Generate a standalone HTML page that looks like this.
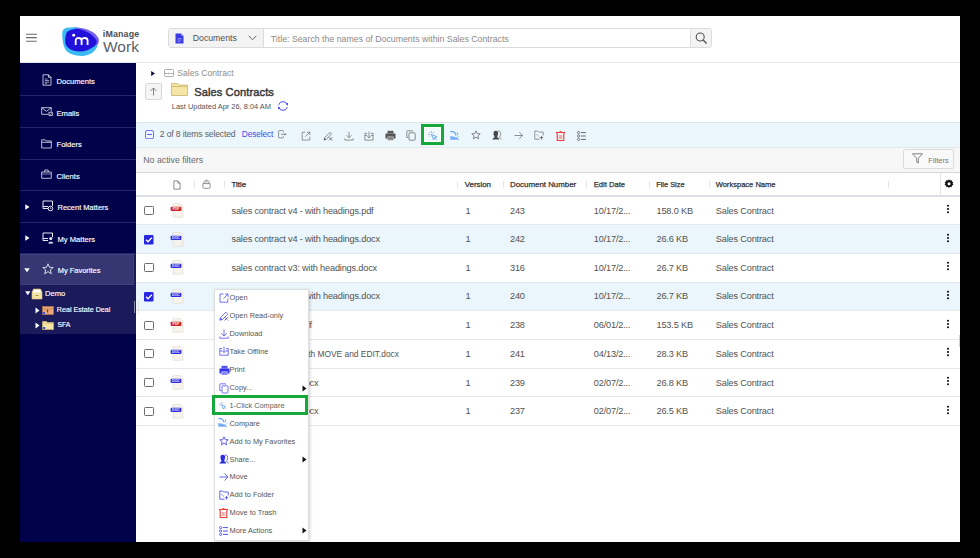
<!DOCTYPE html>
<html><head><meta charset="utf-8">
<style>
*{box-sizing:border-box;margin:0;padding:0}
html,body{width:980px;height:558px;background:#000;overflow:hidden}
body{position:relative;font-family:"Liberation Sans",sans-serif;color:#444}
.a{position:absolute}
.t{position:absolute;white-space:nowrap;line-height:1}
#app{position:absolute;left:20px;top:16px;width:940px;height:526px;background:#fff;overflow:hidden}
</style></head><body>
<div id="app"></div>

<!-- HEADER -->
<div class="a" style="left:20px;top:62px;width:940px;height:1px;background:#e6e6e6"></div>
<svg class="a" style="left:26px;top:32px" width="11" height="11" viewBox="0 0 11 11" stroke="#6a6a6a" stroke-width="1.1"><path d="M0 2.3 H10.8 M0 5.6 H10.8 M0 9.3 H10.8"/></svg>

<!-- logo -->
<svg class="a" style="left:58px;top:24px" width="44" height="34" viewBox="0 0 44 34">
  <path d="M4.3 12 C4 7 5 4.5 9 3.8 C13 3.2 17 3 20 3.6 C30 6 40 13 39.6 20 C39.5 27 31 32 24 32 C16 32 9 29 7 25 C5 21 4.5 16 4.3 12Z" fill="#3cbaf3"/>
  <path d="M16 3.8 C27 2.8 38 8 40.6 14.5 C41.3 17 40.8 19.5 38.8 21.5 L30 12Z" fill="#7362ee"/>
  <path d="M9 8 C12 5.2 16 4.6 20 5 C28 6 35.5 11 38.5 16.5 C39.2 19 38 21 36 22.5 C32 25.5 27 27.5 22 27.5 C15 27.5 8 24 7.3 19 C7 15 7.5 10.5 9 8Z" fill="#2211da"/>
  <circle cx="15.7" cy="11.3" r="1.45" fill="#fff"/>
  <path d="M17.7 21 V16.5 C17.7 14.8 19 14 20.6 14 C22.2 14 23.6 14.8 23.6 16.5 V21 M23.6 16.5 C23.6 14.8 25 14 26.6 14 C28.2 14 29.6 14.8 29.6 16.5 V21" fill="none" stroke="#fff" stroke-width="1.8"/>
</svg>
<div class="t" style="left:102.8px;top:29.8px;font-size:8.9px;font-weight:700;color:#4a4f56;letter-spacing:0.15px">iManage</div>
<div class="t" style="left:103px;top:39.3px;font-size:15.5px;color:#5a626b">Work</div>

<!-- search -->
<div class="a" style="left:168px;top:28px;width:544px;height:20px;border:1px solid #dcdcdc;border-radius:3px;background:#fff"></div>
<div class="a" style="left:169px;top:29px;width:95px;height:18px;background:#f3f3f3;border-right:1px solid #dcdcdc;border-radius:2px 0 0 2px"></div>
<div class="a" style="left:690px;top:29px;width:21px;height:18px;background:#f3f3f3;border-left:1px solid #dcdcdc;border-radius:0 2px 2px 0"></div>


<!-- SIDEBAR -->
<div class="a" style="left:20px;top:63px;width:116px;height:479px;background:#00024a"></div>
<div class="a" style="left:20px;top:95px;width:116px;height:1px;background:#24266a"></div>
<div class="a" style="left:20px;top:127px;width:116px;height:1px;background:#24266a"></div>
<div class="a" style="left:20px;top:159px;width:116px;height:1px;background:#24266a"></div>
<div class="a" style="left:20px;top:190px;width:116px;height:1px;background:#24266a"></div>
<div class="a" style="left:20px;top:222px;width:116px;height:1px;background:#24266a"></div>
<div class="a" style="left:20px;top:253px;width:116px;height:1px;background:#24266a"></div>
<div class="a" style="left:20px;top:254px;width:116px;height:31px;background:#1b1b5c"></div>
<div class="a" style="left:20px;top:254px;width:114.3px;height:30.5px;background:#363672;border:1px solid #40407c;border-left:none"></div>
<div class="a" style="left:20px;top:285px;width:116px;height:49px;background:#1b1b5c"></div>
<div class="a" style="left:134px;top:300.6px;width:1px;height:12.4px;background:#8a8aa8"></div>

<svg class="a" style="left:41.5px;top:73.5px" width="10" height="12" viewBox="0 0 10 12" fill="none" stroke="#dcdcea" stroke-width="0.85">
 <path d="M1 0.8 H6.5 L9 3.3 V11.2 H1Z M6.5 0.8 V3.3 H9"/><path d="M2.8 5 H5.5 M2.8 6.6 H7.2 M2.8 8.2 H7.2 M2.8 9.7 H5" stroke-width="0.7"/></svg>
<div class="t" style="left:56.5px;top:77.5px;font-size:7.6px;color:#fff;-webkit-text-stroke:0.15px #fff">Documents</div>

<svg class="a" style="left:41px;top:107.2px" width="12" height="9" viewBox="0 0 12 9" fill="none" stroke="#dcdcea" stroke-width="0.85">
 <path d="M7.5 7.3 H0.7 V0.7 H10.3 V4.5"/><path d="M0.7 0.7 L5.5 4.3 L10.3 0.7"/><rect x="8" y="5.2" width="3.3" height="3.3" fill="#00024a" stroke-width="0.8"/><path d="M8.8 7 L9.6 7.7 L10.7 6" stroke-width="0.6"/></svg>
<div class="t" style="left:56.5px;top:109.5px;font-size:7.6px;color:#fff;-webkit-text-stroke:0.15px #fff">Emails</div>

<svg class="a" style="left:41px;top:139px" width="11" height="10" viewBox="0 0 11 10" fill="none" stroke="#dcdcea" stroke-width="0.85">
 <path d="M0.7 0.8 H4.3 L5.2 2 H10.3 V9 H0.7Z M0.7 3.3 H10.3"/></svg>
<div class="t" style="left:56.5px;top:141px;font-size:7.6px;color:#fff;-webkit-text-stroke:0.15px #fff">Folders</div>

<svg class="a" style="left:41px;top:169.2px" width="11" height="10" viewBox="0 0 11 10" fill="none" stroke="#dcdcea" stroke-width="0.85">
 <path d="M0.7 3 H10.3 V9.3 H0.7Z M3.8 3 V1 H7.2 V3"/><path d="M0.7 5 H10.3" stroke-width="0.6"/></svg>
<div class="t" style="left:56.5px;top:172.6px;font-size:7.6px;color:#fff;-webkit-text-stroke:0.15px #fff">Clients</div>

<svg class="a" style="left:25px;top:203.5px" width="5" height="6" viewBox="0 0 5 6"><path d="M0.3 0.2 L4.5 3 L0.3 5.8Z" fill="#fff"/></svg>
<svg class="a" style="left:42px;top:200px" width="12" height="12" viewBox="0 0 12 12" fill="none" stroke="#e8e8f0" stroke-width="1">
 <path d="M10.5 6 V1 H1 V8.5 H6 M1 6.5 H6"/><circle cx="8.5" cy="8.5" r="2.3"/><path d="M8.5 7.3 V8.6 H9.6" stroke-width="0.7"/></svg>
<div class="t" style="left:57.5px;top:203.6px;font-size:7.5px;color:#fff;-webkit-text-stroke:0.15px #fff">Recent Matters</div>

<svg class="a" style="left:25px;top:235.3px" width="5" height="6" viewBox="0 0 5 6"><path d="M0.3 0.2 L4.5 3 L0.3 5.8Z" fill="#fff"/></svg>
<svg class="a" style="left:42px;top:232px" width="12" height="12" viewBox="0 0 12 12" fill="none" stroke="#e8e8f0" stroke-width="1">
 <path d="M10.5 5 V1 H1 V8.5 H6 M1 6.5 H6"/><circle cx="8.8" cy="6.5" r="1.6" fill="#e8e8f0" stroke="none"/><path d="M6.3 11.5 C6.3 9 11.3 9 11.3 11.5Z" fill="#e8e8f0" stroke="none"/></svg>
<div class="t" style="left:57.5px;top:235.5px;font-size:7.6px;color:#fff;-webkit-text-stroke:0.15px #fff">My Matters</div>

<svg class="a" style="left:24.3px;top:267.5px" width="6" height="5" viewBox="0 0 6 5"><path d="M0.2 0.3 H5.8 L3 4.3Z" fill="#fff"/></svg>
<svg class="a" style="left:41.5px;top:263px" width="12" height="12" viewBox="0 0 12 12" fill="none" stroke="#e8e8f0" stroke-width="0.9">
 <path d="M6 0.8 L7.5 4.3 L11.2 4.5 L8.3 6.9 L9.3 10.8 L6 8.6 L2.7 10.8 L3.7 6.9 L0.8 4.5 L4.5 4.3 Z"/></svg>
<div class="t" style="left:57.8px;top:267px;font-size:7.45px;color:#fff;-webkit-text-stroke:0.15px #fff">My Favorites</div>

<svg class="a" style="left:24.5px;top:291px" width="6" height="5" viewBox="0 0 6 5"><path d="M0.2 0.3 H5.4 L2.8 4.2Z" fill="#fff"/></svg>
<svg class="a" style="left:31px;top:288px" width="12" height="12" viewBox="0 0 12 12">
 <path d="M1 4 L2.5 1 H9.5 L11 4 V11 H1 Z" fill="#f3e3a5" stroke="#d8c27a" stroke-width="0.6"/><path d="M2 4.5 L3 2 H9 L10 4.5Z" fill="#fff"/><rect x="4.5" y="7" width="3" height="1" fill="#b09a50"/></svg>
<div class="t" style="left:45px;top:289.5px;font-size:7.6px;color:#fff;-webkit-text-stroke:0.15px #fff">Demo</div>

<svg class="a" style="left:35px;top:307px" width="5" height="7" viewBox="0 0 5 7"><path d="M0.5 0.5 L4.5 3.5 L0.5 6.5Z" fill="#fff"/></svg>
<svg class="a" style="left:41.5px;top:306px" width="12" height="9" viewBox="0 0 12 9">
 <rect x="0.5" y="0.5" width="11" height="8" fill="#e8a878" stroke="#c07848" stroke-width="0.6"/><path d="M0.5 3 H11.5" stroke="#c07848" stroke-width="0.6"/><rect x="5" y="3.5" width="1.2" height="3" fill="#a02020"/><rect x="0.5" y="6" width="2.5" height="2" fill="#3a5ae0"/></svg>
<div class="t" style="left:56.8px;top:306.5px;font-size:7.15px;color:#fff;-webkit-text-stroke:0.15px #fff">Real Estate Deal</div>

<svg class="a" style="left:35px;top:322px" width="5" height="7" viewBox="0 0 5 7"><path d="M0.5 0.5 L4.5 3.5 L0.5 6.5Z" fill="#fff"/></svg>
<svg class="a" style="left:42px;top:321px" width="12" height="9" viewBox="0 0 12 9">
 <path d="M0.5 0.5 H4.5 L5.5 1.5 H11.5 V8.5 H0.5Z" fill="#f3e5a8" stroke="#d4bc70" stroke-width="0.6"/><path d="M0.5 2.5 H11.5" stroke="#d4bc70" stroke-width="0.6"/><rect x="0.8" y="6" width="2.5" height="2" fill="#3a5ae0"/></svg>
<div class="t" style="left:57.4px;top:321.5px;font-size:6.9px;color:#fff;-webkit-text-stroke:0.15px #fff">SFA</div>


<!-- SEARCH CONTENT -->
<svg class="a" style="left:174.5px;top:33px" width="9" height="11" viewBox="0 0 9 11">
 <path d="M0.5 0.5 H6 L8.5 3 V10.5 H0.5Z" fill="#3a3ae6"/><path d="M6 0.5 V3 H8.5" fill="#8a8af0"/><path d="M2.5 5.5 H6.5 M2.5 7 H6.5 M2.5 8.5 H5" stroke="#b8b8f8" stroke-width="0.6"/></svg>
<div class="t" style="left:192.8px;top:34.4px;font-size:8.7px;color:#505050">Documents</div>
<svg class="a" style="left:247.5px;top:35px" width="9" height="6" viewBox="0 0 9 6"><path d="M0.7 0.8 L4.5 4.8 L8.3 0.8" fill="none" stroke="#666" stroke-width="1"/></svg>
<div class="t" style="left:270.8px;top:34.6px;font-size:8.77px;color:#8a8a8a">Title: Search the names of Documents within Sales Contracts</div>
<svg class="a" style="left:695px;top:31.5px" width="13" height="13" viewBox="0 0 13 13" fill="none" stroke="#555" stroke-width="1.1">
 <circle cx="5.2" cy="5.0" r="4.0"/><path d="M8.1 8 L11.6 11.5" stroke-width="1.3"/></svg>

<!-- BREADCRUMB / TITLE -->
<svg class="a" style="left:151px;top:71.2px" width="5" height="5" viewBox="0 0 5 5"><path d="M0.2 0.1 L4 2.5 L0.2 4.9Z" fill="#0a0a3a"/></svg>
<svg class="a" style="left:164px;top:68.8px" width="10" height="8" viewBox="0 0 10 8" fill="none" stroke="#a0a0a0" stroke-width="0.85">
 <rect x="0.5" y="0.5" width="9" height="7" rx="0.8"/><path d="M1 4.5 H3.8 M6.2 4.5 H9"/><path d="M4.3 3.3 L5.8 4.5 L4.3 5.7Z" fill="#999" stroke="none"/></svg>
<div class="t" style="left:177.3px;top:69px;font-size:8.6px;color:#8e8e8e">Sales Contract</div>

<div class="a" style="left:145px;top:83px;width:17px;height:17px;border:1px solid #d8d8d8;border-radius:2px;background:#f5f5f5"></div>
<svg class="a" style="left:149px;top:87px" width="9" height="10" viewBox="0 0 9 10" fill="none" stroke="#666" stroke-width="0.8"><path d="M4.5 8.5 V1 M1.5 4 L4.5 1 L7.5 4"/></svg>
<svg class="a" style="left:171px;top:83px" width="17" height="13" viewBox="0 0 17 13">
 <path d="M0.5 0.5 H6.5 L7.8 2 H16.5 V12.5 H0.5Z" fill="#f5e6a6" stroke="#c9b26a" stroke-width="0.8"/><path d="M0.5 3.5 H16.5" stroke="#c9b26a" stroke-width="0.8"/></svg>
<div class="t" style="left:194.2px;top:86.6px;font-size:11.1px;color:#3a3a3a;-webkit-text-stroke:0.45px #3a3a3a;letter-spacing:0.1px">Sales Contracts</div>
<div class="t" style="left:171.8px;top:102.8px;font-size:7.45px;color:#555">Last Updated Apr 26, 8:04 AM</div>
<svg class="a" style="left:278.3px;top:100.9px" width="10" height="10" viewBox="0 0 10 10" fill="none" stroke="#3a3ae6" stroke-width="0.9">
 <path d="M0.75 3.86 A4.4 4.4 0 0 1 9.25 3.86"/><path d="M9.25 6.14 A4.4 4.4 0 0 1 0.75 6.14"/><path d="M8.2 2.6 L9.6 4.3 L10 2.3Z M1.8 7.4 L0.4 5.7 L0 7.7Z" fill="#3a3ae6" stroke-width="0.5"/></svg>

<!-- TOOLBAR -->
<div class="a" style="left:136px;top:121.5px;width:824px;height:1px;background:#dde3e8"></div>
<div class="a" style="left:136px;top:122.5px;width:824px;height:24px;background:#ebf7fd"></div>
<div class="a" style="left:136px;top:146.5px;width:824px;height:25.5px;background:#f7f7f7;border-top:1px solid #e4e8ea"></div>
<div class="a" style="left:136px;top:172px;width:824px;height:1px;background:#d6d6d6"></div>

<svg class="a" style="left:145px;top:130px" width="9" height="9" viewBox="0 0 9 9"><rect x="0.5" y="0.5" width="8" height="8.2" rx="1.5" fill="none" stroke="#5a5aec" stroke-width="0.85"/><path d="M2.2 4.5 H6.8" stroke="#4848e0" stroke-width="0.9"/></svg>
<div class="t" style="left:159.8px;top:129.9px;font-size:8.6px;color:#606060;letter-spacing:-0.15px">2 of 8 items selected</div>
<div class="t" style="left:241.8px;top:129.8px;font-size:8.4px;color:#4a4ae8;letter-spacing:-0.15px">Deselect</div>
<svg class="a" style="left:277.5px;top:130px" width="9" height="9" viewBox="0 0 9 9" fill="none" stroke="#808080" stroke-width="0.85"><path d="M5.5 2.2 V1.3 C5.5 0.9 5.2 0.6 4.8 0.6 H1.2 C0.8 0.6 0.6 0.9 0.6 1.3 V7.2 C0.6 7.6 0.8 7.9 1.2 7.9 H4.8 C5.2 7.9 5.5 7.6 5.5 7.2 V6.3 M3 4.25 H7.5"/><path d="M6.6 3 L8.6 4.25 L6.6 5.5Z" fill="#707070" stroke="none"/></svg>


<!-- TOOLBAR ICONS -->
<svg class="a" style="left:301px;top:130.5px" width="10" height="10" viewBox="0 0 10 10" fill="none" stroke="#808080" stroke-width="0.85">
 <path d="M4.3 1.2 H1.2 V9 H8.8 V5.8"/><path d="M4.3 5.7 L8.8 1.2 M6 1.2 H8.8 V4"/></svg>
<svg class="a" style="left:322.5px;top:130.5px" width="10" height="10" viewBox="0 0 10 10">
 <path d="M1 9 L1.6 6.8 L7 1.4 L8.6 3 L3.2 8.4Z" fill="none" stroke="#707070" stroke-width="0.85"/><path d="M1 9 L1.6 6.8 L3.2 8.4Z" fill="#606060"/><path d="M6 6.3 L9.2 9.5 M9.2 6.3 L6 9.5" stroke="#606060" stroke-width="0.85"/></svg>
<svg class="a" style="left:343.5px;top:130.5px" width="10" height="10" viewBox="0 0 10 10" fill="none" stroke="#808080" stroke-width="0.85">
 <path d="M5 0.8 V6.8 M2.5 4.3 L5 6.8 L7.5 4.3"/><path d="M0.9 7.4 V9.1 H9.1 V7.4"/></svg>
<svg class="a" style="left:364px;top:130.5px" width="10" height="10" viewBox="0 0 10 10" fill="none" stroke="#808080" stroke-width="0.85">
 <path d="M3.2 2.3 H0.9 V9.1 H9.1 V2.3 H6.8 M0.9 4.5 H3.2 M6.8 4.5 H9.1"/><path d="M5 0.6 V7 M3.2 5.2 L5 7 L6.8 5.2"/></svg>
<svg class="a" style="left:385px;top:130px" width="11" height="11" viewBox="0 0 11 11">
 <path d="M2.5 0.8 H8.5 V3.5 H2.5Z" fill="#5a5a5a"/><path d="M0.5 3.5 H10.5 V8.5 H8.5 V6.5 H2.5 V8.5 H0.5Z" fill="#555"/><path d="M2.5 6.5 H8.5 V10.2 H2.5Z" fill="#8a8a8a"/></svg>
<svg class="a" style="left:406px;top:130px" width="10" height="11" viewBox="0 0 10 11" fill="none" stroke="#8a8a8a" stroke-width="1">
 <path d="M6.5 1.5 V0.8 H1.5 C1 0.8 0.8 1 0.8 1.5 V7.5 H2.5"/><rect x="3" y="2.8" width="6.2" height="7.4" rx="0.8"/></svg>
<div class="a" style="left:421.1px;top:123.5px;width:23.4px;height:21.3px;border:3px solid #17a83a;background:#f2f9fd;box-shadow:inset 0 0 0 0.8px #fff"></div>
<svg class="a" style="left:427px;top:131px" width="11" height="10" viewBox="0 0 11 10" fill="none" stroke="#5a9cf2" stroke-width="0.75">
 <path d="M4.4 0.3 V1.8 M6.8 0.9 L5.9 2 M1.2 3.5 H2.9 M2.25 5.6 L3.1 4.8 M2.7 1.3 L3.3 2.2"/>
 <path d="M4.4 3.3 L9.8 5.8 L7.5 6.8 L6.6 8.8 Z" stroke-width="0.9"/><path d="M7.5 6.8 L9.6 8.9" stroke-width="0.9"/></svg>
<svg class="a" style="left:450px;top:131px" width="10" height="10" viewBox="0 0 10 10"><path d="M0.3 0.6 C2.5 0.2 4.5 1 5.3 2.5 L6.2 4.6" fill="none" stroke="#5e9ef2" stroke-width="1.1"/><path d="M7.5 1.4 V4" stroke="#6aa6f3" stroke-width="0.9"/><path d="M0.3 5.3 C2.5 5.3 4.5 5.8 6.2 6.5 L8.9 7.9 V8.7 H0.3 Z" fill="#78aef5"/><path d="M8.6 5.3 C8.1 6 7.3 6.5 6.5 6.6" fill="none" stroke="#78aef5" stroke-width="0.8"/></svg>
<svg class="a" style="left:471px;top:130px" width="10" height="10" viewBox="0 0 10 10" fill="none" stroke="#7a7a7a" stroke-width="0.9">
 <path d="M5 0.8 L6.2 3.6 L9.2 3.8 L6.9 5.7 L7.7 8.9 L5 7.2 L2.3 8.9 L3.1 5.7 L0.8 3.8 L3.8 3.6Z"/></svg>
<svg class="a" style="left:492.2px;top:129.8px" width="10" height="10" viewBox="0 0 10 10">
 <path d="M6 0.8 C8.5 0.8 9 3 8.5 5 C8 6.5 7.5 7 7.5 7.5 C8.5 8 9.3 8.5 9.3 9.5" fill="none" stroke="#7a7a7a" stroke-width="0.8"/>
 <path d="M3.8 0.8 C6 0.8 6.5 2.5 6 4.5 C5.7 5.8 5.2 6.5 5.3 7.2 C6.5 7.8 7.3 8.3 7.3 9.5 H0.5 C0.5 8.3 1.5 7.8 2.5 7.2 C2.5 6.5 1.8 5.8 1.6 4.5 C1.2 2.5 1.8 0.8 3.8 0.8Z" fill="#4a4a4a"/></svg>
<svg class="a" style="left:513.5px;top:131px" width="10" height="9" viewBox="0 0 10 9" fill="none" stroke="#7a7a7a" stroke-width="0.85">
 <path d="M0.5 4.5 H8.5 M5.3 1.2 L8.5 4.5 L5.3 7.8"/></svg>
<svg class="a" style="left:534px;top:129.9px" width="10" height="10" viewBox="0 0 10 10" fill="none" stroke="#8a8a8a" stroke-width="0.9">
 <path d="M5.5 9.2 H0.8 V1 H3.5 L4.5 2 H9.2 V5.5"/><path d="M7.5 6 V9.5 M5.8 7.7 H9.2" stroke="#666"/><path d="M2 4 L5 6.5" stroke="#999" stroke-width="0.6"/></svg>
<svg class="a" style="left:555.5px;top:130.5px" width="9" height="10" viewBox="0 0 9 10">
 <path d="M0.5 1.5 H8.5 L7.8 3 V9.5 H1.2 V3Z" fill="none" stroke="#f03a3a" stroke-width="1.1"/><path d="M3.5 0.8 H5.5" stroke="#f03a3a" stroke-width="1.4"/>
 <path d="M3.2 4 V8 M4.5 4 V8 M5.8 4 V8" stroke="#f37a7a" stroke-width="0.7"/></svg>
<svg class="a" style="left:576.5px;top:130.5px" width="10" height="10" viewBox="0 0 10 10" fill="none" stroke="#6a6a6a" stroke-width="0.9">
 <circle cx="1.6" cy="1.6" r="1.1"/><circle cx="1.6" cy="5" r="1.1"/><circle cx="1.6" cy="8.4" r="1.1"/><path d="M4 1.6 H9 M4 5 H9 M4 8.4 H9" stroke-width="1"/></svg>

<!-- FILTER ROW -->
<div class="t" style="left:143.3px;top:156.2px;font-size:8.75px;color:#6a6a6a">No active filters</div>
<div class="a" style="left:903px;top:149.3px;width:51px;height:20px;border:1px solid #dcdcdc;border-radius:2px;background:#f9f9f9"></div>
<svg class="a" style="left:911.5px;top:152.5px" width="11" height="11" viewBox="0 0 11 11" fill="none" stroke="#777" stroke-width="0.9">
 <path d="M0.5 0.8 H10.5 L6.3 5.3 V10 L4.7 9 V5.3Z"/></svg>
<div class="t" style="left:928.3px;top:156.8px;font-size:7.5px;color:#777">Filters</div>


<!-- TABLE HEADER -->

<div class="a" style="left:939.5px;top:173px;width:1px;height:22px;background:#e6e6e6"></div>
<svg class="a" style="left:172.5px;top:179.5px" width="8" height="10" viewBox="0 0 8 10" fill="none" stroke="#777" stroke-width="0.85"><path d="M0.9 0.9 H4.8 L7.1 3.2 V9.1 H0.9Z"/><path d="M4.8 0.9 V3.2 H7.1" stroke-width="0.7"/></svg>
<div class="a" style="left:194px;top:181.3px;width:1px;height:6.8px;background:#e2e4e8"></div>
<svg class="a" style="left:201.7px;top:179.3px" width="9" height="10" viewBox="0 0 9 10" fill="none" stroke="#808080" stroke-width="0.85"><path d="M2 4.6 V3.3 C2 0.4 7 0.4 7 3.3 V4.6"/><path d="M0.9 4.6 H8.1 V8.2 C8.1 8.9 7.6 9.3 7 9.3 H2 C1.4 9.3 0.9 8.9 0.9 8.2Z"/><circle cx="4.5" cy="2.7" r="0.8" stroke-width="0.6"/></svg>
<div class="a" style="left:224px;top:181.3px;width:1px;height:6.8px;background:#e2e4e8"></div>
<div class="t" style="left:231.5px;top:180.5px;font-size:7.9px;color:#2a2a3a;-webkit-text-stroke:0.25px #2a2a3a">Title</div>
<div class="a" style="left:457px;top:181.3px;width:1px;height:6.8px;background:#e2e4e8"></div>
<div class="t" style="left:464.7px;top:180.5px;font-size:7.9px;color:#333;-webkit-text-stroke:0.25px #333">Version</div>
<div class="a" style="left:502.5px;top:181.3px;width:1px;height:6.8px;background:#e2e4e8"></div>
<div class="t" style="left:510px;top:180.5px;font-size:7.9px;color:#333;-webkit-text-stroke:0.25px #333">Document Number</div>
<div class="a" style="left:586px;top:181.3px;width:1px;height:6.8px;background:#e2e4e8"></div>
<div class="t" style="left:593.8px;top:180.5px;font-size:7.6px;color:#333;-webkit-text-stroke:0.25px #333">Edit Date</div>
<div class="a" style="left:649px;top:181.3px;width:1px;height:6.8px;background:#e2e4e8"></div>
<div class="t" style="left:656.2px;top:180.5px;font-size:7.4px;color:#333;-webkit-text-stroke:0.25px #333">File Size</div>
<div class="a" style="left:708.5px;top:181.3px;width:1px;height:6.8px;background:#e2e4e8"></div>
<div class="t" style="left:715.7px;top:180.5px;font-size:7.55px;color:#333;-webkit-text-stroke:0.25px #333">Workspace Name</div>
<div class="a" style="left:887.5px;top:181.3px;width:1px;height:6.8px;background:#e2e4e8"></div>
<svg class="a" style="left:943.5px;top:178.5px" width="10" height="10" viewBox="0 0 10 10"><path d="M5 0.3 L6 1.6 L7.6 1.1 L7.9 2.6 L9.4 3.2 L8.6 4.6 L9.4 6.1 L7.9 6.6 L7.6 8.2 L6 7.7 L5 9 L4 7.7 L2.4 8.2 L2.1 6.6 L0.6 6.1 L1.4 4.6 L0.6 3.2 L2.1 2.6 L2.4 1.1 L4 1.6Z" fill="#111"/><circle cx="5" cy="4.65" r="1.5" fill="#fff"/></svg>

<!-- ROWS -->
<div class="a" style="left:136px;top:195.3px;width:824px;height:1.7px;background:#dcdfe3"></div>
<div class="a" style="left:136px;top:197.0px;width:824px;height:27.2px;background:#fff"></div>
<div class="a" style="left:136px;top:224.2px;width:824px;height:1px;background:#e6e8eb"></div>
<div class="a" style="left:144.1px;top:205.9px;width:9.5px;height:9.3px;border:1px solid #6e6e6e;border-radius:1.3px;background:#fff"></div>
<svg class="a" style="left:170px;top:203.1px" width="14" height="15" viewBox="0 0 14 15"><path d="M3 0.4 H10.2 L12.9 3.1 V13.6 C12.9 14 12.6 14.3 12.2 14.3 H3.7 C3.3 14.3 3 14 3 13.6Z" fill="#f6f3ec" stroke="#dcd8cf" stroke-width="0.6"/><rect x="0.6" y="3.8" width="10.8" height="4.3" rx="1" fill="#d02424"/><text x="6" y="7.3" font-size="3.5" font-family="Liberation Sans" font-weight="700" fill="#fff" text-anchor="middle" opacity="0.9">PDF</text></svg>
<div class="t" style="left:231.5px;top:206.5px;font-size:9.2px;color:#525252;letter-spacing:-0.18px;">sales contract v4 - with headings.pdf</div>
<div class="t" style="left:465.5px;top:206.5px;font-size:9.2px;color:#525252;letter-spacing:-0.18px;">1</div>
<div class="t" style="left:510px;top:206.5px;font-size:9.2px;color:#525252;letter-spacing:-0.18px;">243</div>
<div class="t" style="left:593.8px;top:206.5px;font-size:9.2px;color:#525252;letter-spacing:-0.18px;">10/17/2...</div>
<div class="t" style="left:656.5px;top:206.5px;font-size:9.2px;color:#525252;letter-spacing:-0.18px;">158.0 KB</div>
<div class="t" style="left:715.8px;top:206.5px;font-size:9.2px;color:#525252;letter-spacing:-0.18px;">Sales Contract</div>
<svg class="a" style="left:946.4px;top:203.9px" width="4" height="10" viewBox="0 0 4 10"><circle cx="2" cy="1.7" r="1.05" fill="#111"/><circle cx="2" cy="5" r="1.05" fill="#111"/><circle cx="2" cy="8.3" r="1.05" fill="#111"/></svg>
<div class="a" style="left:136px;top:225.2px;width:824px;height:27.7px;background:#eaf6fc"></div>
<div class="a" style="left:136px;top:252.9px;width:824px;height:1px;background:#e6e8eb"></div>
<svg class="a" style="left:144.1px;top:234.5px" width="10" height="10" viewBox="0 0 10 10"><rect x="0" y="0" width="9.5" height="9.5" rx="1.2" fill="#2727df"/><path d="M2 4.8 L4 6.8 L7.8 2.8" fill="none" stroke="#fff" stroke-width="1.3"/></svg>
<svg class="a" style="left:170px;top:231.8px" width="14" height="15" viewBox="0 0 14 15"><path d="M3 0.4 H10.2 L12.9 3.1 V13.6 C12.9 14 12.6 14.3 12.2 14.3 H3.7 C3.3 14.3 3 14 3 13.6Z" fill="#f6f3ec" stroke="#dcd8cf" stroke-width="0.6"/><rect x="0.6" y="3.8" width="10.8" height="4.3" rx="1" fill="#2f2fe0"/><text x="6" y="7.3" font-size="3.5" font-family="Liberation Sans" font-weight="700" fill="#fff" text-anchor="middle" opacity="0.9">DOC</text></svg>
<div class="t" style="left:231.5px;top:235.1px;font-size:9.2px;color:#525252;letter-spacing:-0.18px;">sales contract v4 - with headings.docx</div>
<div class="t" style="left:465.5px;top:235.1px;font-size:9.2px;color:#525252;letter-spacing:-0.18px;">1</div>
<div class="t" style="left:510px;top:235.1px;font-size:9.2px;color:#525252;letter-spacing:-0.18px;">242</div>
<div class="t" style="left:593.8px;top:235.1px;font-size:9.2px;color:#525252;letter-spacing:-0.18px;">10/17/2...</div>
<div class="t" style="left:656.5px;top:235.1px;font-size:9.2px;color:#525252;letter-spacing:-0.18px;">26.6 KB</div>
<div class="t" style="left:715.8px;top:235.1px;font-size:9.2px;color:#525252;letter-spacing:-0.18px;">Sales Contract</div>
<svg class="a" style="left:946.4px;top:232.6px" width="4" height="10" viewBox="0 0 4 10"><circle cx="2" cy="1.7" r="1.05" fill="#111"/><circle cx="2" cy="5" r="1.05" fill="#111"/><circle cx="2" cy="8.3" r="1.05" fill="#111"/></svg>
<div class="a" style="left:136px;top:253.9px;width:824px;height:27.6px;background:#fff"></div>
<div class="a" style="left:136px;top:281.5px;width:824px;height:1px;background:#e6e8eb"></div>
<div class="a" style="left:144.1px;top:263.2px;width:9.5px;height:9.3px;border:1px solid #6e6e6e;border-radius:1.3px;background:#fff"></div>
<svg class="a" style="left:170px;top:260.4px" width="14" height="15" viewBox="0 0 14 15"><path d="M3 0.4 H10.2 L12.9 3.1 V13.6 C12.9 14 12.6 14.3 12.2 14.3 H3.7 C3.3 14.3 3 14 3 13.6Z" fill="#f6f3ec" stroke="#dcd8cf" stroke-width="0.6"/><rect x="0.6" y="3.8" width="10.8" height="4.3" rx="1" fill="#2f2fe0"/><text x="6" y="7.3" font-size="3.5" font-family="Liberation Sans" font-weight="700" fill="#fff" text-anchor="middle" opacity="0.9">DOC</text></svg>
<div class="t" style="left:231.5px;top:263.8px;font-size:9.2px;color:#525252;letter-spacing:-0.18px;">sales contract v3: with headings.docx</div>
<div class="t" style="left:465.5px;top:263.8px;font-size:9.2px;color:#525252;letter-spacing:-0.18px;">1</div>
<div class="t" style="left:510px;top:263.8px;font-size:9.2px;color:#525252;letter-spacing:-0.18px;">316</div>
<div class="t" style="left:593.8px;top:263.8px;font-size:9.2px;color:#525252;letter-spacing:-0.18px;">10/17/2...</div>
<div class="t" style="left:656.5px;top:263.8px;font-size:9.2px;color:#525252;letter-spacing:-0.18px;">26.7 KB</div>
<div class="t" style="left:715.8px;top:263.8px;font-size:9.2px;color:#525252;letter-spacing:-0.18px;">Sales Contract</div>
<svg class="a" style="left:946.4px;top:261.2px" width="4" height="10" viewBox="0 0 4 10"><circle cx="2" cy="1.7" r="1.05" fill="#111"/><circle cx="2" cy="5" r="1.05" fill="#111"/><circle cx="2" cy="8.3" r="1.05" fill="#111"/></svg>
<div class="a" style="left:136px;top:282.5px;width:824px;height:27.7px;background:#eaf6fc"></div>
<div class="a" style="left:136px;top:310.2px;width:824px;height:1px;background:#e6e8eb"></div>
<svg class="a" style="left:144.1px;top:291.8px" width="10" height="10" viewBox="0 0 10 10"><rect x="0" y="0" width="9.5" height="9.5" rx="1.2" fill="#2727df"/><path d="M2 4.8 L4 6.8 L7.8 2.8" fill="none" stroke="#fff" stroke-width="1.3"/></svg>
<svg class="a" style="left:170px;top:289.1px" width="14" height="15" viewBox="0 0 14 15"><path d="M3 0.4 H10.2 L12.9 3.1 V13.6 C12.9 14 12.6 14.3 12.2 14.3 H3.7 C3.3 14.3 3 14 3 13.6Z" fill="#f6f3ec" stroke="#dcd8cf" stroke-width="0.6"/><rect x="0.6" y="3.8" width="10.8" height="4.3" rx="1" fill="#2f2fe0"/><text x="6" y="7.3" font-size="3.5" font-family="Liberation Sans" font-weight="700" fill="#fff" text-anchor="middle" opacity="0.9">DOC</text></svg>
<div class="t" style="left:231.5px;top:292.4px;font-size:9.2px;color:#525252;letter-spacing:-0.18px;">sales contract v2 - with headings.docx</div>
<div class="t" style="left:465.5px;top:292.4px;font-size:9.2px;color:#525252;letter-spacing:-0.18px;">1</div>
<div class="t" style="left:510px;top:292.4px;font-size:9.2px;color:#525252;letter-spacing:-0.18px;">240</div>
<div class="t" style="left:593.8px;top:292.4px;font-size:9.2px;color:#525252;letter-spacing:-0.18px;">10/17/2...</div>
<div class="t" style="left:656.5px;top:292.4px;font-size:9.2px;color:#525252;letter-spacing:-0.18px;">26.7 KB</div>
<div class="t" style="left:715.8px;top:292.4px;font-size:9.2px;color:#525252;letter-spacing:-0.18px;">Sales Contract</div>
<svg class="a" style="left:946.4px;top:289.9px" width="4" height="10" viewBox="0 0 4 10"><circle cx="2" cy="1.7" r="1.05" fill="#111"/><circle cx="2" cy="5" r="1.05" fill="#111"/><circle cx="2" cy="8.3" r="1.05" fill="#111"/></svg>
<div class="a" style="left:136px;top:311.2px;width:824px;height:27.7px;background:#fff"></div>
<div class="a" style="left:136px;top:338.9px;width:824px;height:1px;background:#e6e8eb"></div>
<div class="a" style="left:144.1px;top:320.5px;width:9.5px;height:9.3px;border:1px solid #6e6e6e;border-radius:1.3px;background:#fff"></div>
<svg class="a" style="left:170px;top:317.7px" width="14" height="15" viewBox="0 0 14 15"><path d="M3 0.4 H10.2 L12.9 3.1 V13.6 C12.9 14 12.6 14.3 12.2 14.3 H3.7 C3.3 14.3 3 14 3 13.6Z" fill="#f6f3ec" stroke="#dcd8cf" stroke-width="0.6"/><rect x="0.6" y="3.8" width="10.8" height="4.3" rx="1" fill="#d02424"/><text x="6" y="7.3" font-size="3.5" font-family="Liberation Sans" font-weight="700" fill="#fff" text-anchor="middle" opacity="0.9">PDF</text></svg>
<div class="t" style="left:231.5px;top:321.1px;font-size:9.2px;color:#525252;letter-spacing:-0.18px;">sales contract v1.pdf</div>
<div class="t" style="left:465.5px;top:321.1px;font-size:9.2px;color:#525252;letter-spacing:-0.18px;">1</div>
<div class="t" style="left:510px;top:321.1px;font-size:9.2px;color:#525252;letter-spacing:-0.18px;">238</div>
<div class="t" style="left:593.8px;top:321.1px;font-size:9.2px;color:#525252;letter-spacing:-0.18px;">06/01/2...</div>
<div class="t" style="left:656.5px;top:321.1px;font-size:9.2px;color:#525252;letter-spacing:-0.18px;">153.5 KB</div>
<div class="t" style="left:715.8px;top:321.1px;font-size:9.2px;color:#525252;letter-spacing:-0.18px;">Sales Contract</div>
<svg class="a" style="left:946.4px;top:318.5px" width="4" height="10" viewBox="0 0 4 10"><circle cx="2" cy="1.7" r="1.05" fill="#111"/><circle cx="2" cy="5" r="1.05" fill="#111"/><circle cx="2" cy="8.3" r="1.05" fill="#111"/></svg>
<div class="a" style="left:136px;top:339.9px;width:824px;height:27.7px;background:#fff"></div>
<div class="a" style="left:136px;top:367.6px;width:824px;height:1px;background:#e6e8eb"></div>
<div class="a" style="left:144.1px;top:349.2px;width:9.5px;height:9.3px;border:1px solid #6e6e6e;border-radius:1.3px;background:#fff"></div>
<svg class="a" style="left:170px;top:346.4px" width="14" height="15" viewBox="0 0 14 15"><path d="M3 0.4 H10.2 L12.9 3.1 V13.6 C12.9 14 12.6 14.3 12.2 14.3 H3.7 C3.3 14.3 3 14 3 13.6Z" fill="#f6f3ec" stroke="#dcd8cf" stroke-width="0.6"/><rect x="0.6" y="3.8" width="10.8" height="4.3" rx="1" fill="#2f2fe0"/><text x="6" y="7.3" font-size="3.5" font-family="Liberation Sans" font-weight="700" fill="#fff" text-anchor="middle" opacity="0.9">DOC</text></svg>
<div class="t" style="right:581px;top:350.0px;font-size:8.4px;color:#525252">sales contract v4 with MOVE and EDIT.docx</div>
<div class="t" style="left:465.5px;top:349.8px;font-size:9.2px;color:#525252;letter-spacing:-0.18px;">1</div>
<div class="t" style="left:510px;top:349.8px;font-size:9.2px;color:#525252;letter-spacing:-0.18px;">241</div>
<div class="t" style="left:593.8px;top:349.8px;font-size:9.2px;color:#525252;letter-spacing:-0.18px;">04/13/2...</div>
<div class="t" style="left:656.5px;top:349.8px;font-size:9.2px;color:#525252;letter-spacing:-0.18px;">28.3 KB</div>
<div class="t" style="left:715.8px;top:349.8px;font-size:9.2px;color:#525252;letter-spacing:-0.18px;">Sales Contract</div>
<svg class="a" style="left:946.4px;top:347.2px" width="4" height="10" viewBox="0 0 4 10"><circle cx="2" cy="1.7" r="1.05" fill="#111"/><circle cx="2" cy="5" r="1.05" fill="#111"/><circle cx="2" cy="8.3" r="1.05" fill="#111"/></svg>
<div class="a" style="left:136px;top:368.6px;width:824px;height:27.7px;background:#fff"></div>
<div class="a" style="left:136px;top:396.3px;width:824px;height:1px;background:#e6e8eb"></div>
<div class="a" style="left:144.1px;top:378.0px;width:9.5px;height:9.3px;border:1px solid #6e6e6e;border-radius:1.3px;background:#fff"></div>
<svg class="a" style="left:170px;top:375.2px" width="14" height="15" viewBox="0 0 14 15"><path d="M3 0.4 H10.2 L12.9 3.1 V13.6 C12.9 14 12.6 14.3 12.2 14.3 H3.7 C3.3 14.3 3 14 3 13.6Z" fill="#f6f3ec" stroke="#dcd8cf" stroke-width="0.6"/><rect x="0.6" y="3.8" width="10.8" height="4.3" rx="1" fill="#2f2fe0"/><text x="6" y="7.3" font-size="3.5" font-family="Liberation Sans" font-weight="700" fill="#fff" text-anchor="middle" opacity="0.9">DOC</text></svg>
<div class="t" style="left:231.5px;top:378.5px;font-size:9.2px;color:#525252;letter-spacing:-0.18px;">sales contract v2.docx</div>
<div class="t" style="left:465.5px;top:378.5px;font-size:9.2px;color:#525252;letter-spacing:-0.18px;">1</div>
<div class="t" style="left:510px;top:378.5px;font-size:9.2px;color:#525252;letter-spacing:-0.18px;">239</div>
<div class="t" style="left:593.8px;top:378.5px;font-size:9.2px;color:#525252;letter-spacing:-0.18px;">02/07/2...</div>
<div class="t" style="left:656.5px;top:378.5px;font-size:9.2px;color:#525252;letter-spacing:-0.18px;">26.8 KB</div>
<div class="t" style="left:715.8px;top:378.5px;font-size:9.2px;color:#525252;letter-spacing:-0.18px;">Sales Contract</div>
<svg class="a" style="left:946.4px;top:376.0px" width="4" height="10" viewBox="0 0 4 10"><circle cx="2" cy="1.7" r="1.05" fill="#111"/><circle cx="2" cy="5" r="1.05" fill="#111"/><circle cx="2" cy="8.3" r="1.05" fill="#111"/></svg>
<div class="a" style="left:136px;top:397.3px;width:824px;height:27.7px;background:#fff"></div>
<div class="a" style="left:136px;top:425.0px;width:824px;height:1px;background:#e6e8eb"></div>
<div class="a" style="left:144.1px;top:406.6px;width:9.5px;height:9.3px;border:1px solid #6e6e6e;border-radius:1.3px;background:#fff"></div>
<svg class="a" style="left:170px;top:403.8px" width="14" height="15" viewBox="0 0 14 15"><path d="M3 0.4 H10.2 L12.9 3.1 V13.6 C12.9 14 12.6 14.3 12.2 14.3 H3.7 C3.3 14.3 3 14 3 13.6Z" fill="#f6f3ec" stroke="#dcd8cf" stroke-width="0.6"/><rect x="0.6" y="3.8" width="10.8" height="4.3" rx="1" fill="#2f2fe0"/><text x="6" y="7.3" font-size="3.5" font-family="Liberation Sans" font-weight="700" fill="#fff" text-anchor="middle" opacity="0.9">DOC</text></svg>
<div class="t" style="left:231.5px;top:407.2px;font-size:9.2px;color:#525252;letter-spacing:-0.18px;">sales contract v1.docx</div>
<div class="t" style="left:465.5px;top:407.2px;font-size:9.2px;color:#525252;letter-spacing:-0.18px;">1</div>
<div class="t" style="left:510px;top:407.2px;font-size:9.2px;color:#525252;letter-spacing:-0.18px;">237</div>
<div class="t" style="left:593.8px;top:407.2px;font-size:9.2px;color:#525252;letter-spacing:-0.18px;">02/07/2...</div>
<div class="t" style="left:656.5px;top:407.2px;font-size:9.2px;color:#525252;letter-spacing:-0.18px;">26.5 KB</div>
<div class="t" style="left:715.8px;top:407.2px;font-size:9.2px;color:#525252;letter-spacing:-0.18px;">Sales Contract</div>
<svg class="a" style="left:946.4px;top:404.6px" width="4" height="10" viewBox="0 0 4 10"><circle cx="2" cy="1.7" r="1.05" fill="#111"/><circle cx="2" cy="5" r="1.05" fill="#111"/><circle cx="2" cy="8.3" r="1.05" fill="#111"/></svg>
<div class="a" style="left:138.2px;top:301px;width:0.6px;height:12px;background:#e0e0e0"></div>
<div class="a" style="left:958.6px;top:335px;width:0.8px;height:12px;background:#d0d0d0"></div>

<!-- CONTEXT MENU -->
<div class="a" style="left:213.5px;top:289.3px;width:95px;height:251.5px;background:#fff;border:1px solid #dedede;box-shadow:1px 1px 3px rgba(0,0,0,0.18)"></div>
<svg class="a" style="left:218.5px;top:292.7px" width="11" height="11" viewBox="0 0 11 11"><path d="M4.5 1 H1 V9.2 H8.8 V5.5" fill="none" stroke="#5252f0" stroke-width="0.8"/><path d="M4.5 5.5 L9 1 M6 1 H9 V4" fill="none" stroke="#5252f0" stroke-width="0.8"/></svg>
<div class="t" style="left:229.5px;top:293.9px;font-size:7.4px;color:#555">Open</div>
<svg class="a" style="left:218.5px;top:310.8px" width="11" height="11" viewBox="0 0 11 11"><path d="M0.8 9.2 L1.5 6.5 L6.8 1.2 L8.8 3.2 L3.5 8.5Z" fill="none" stroke="#5252f0" stroke-width="0.8"/><path d="M0.8 9.2 L1.5 6.5 L3.5 8.5Z" fill="#5252f0"/><path d="M5.5 6 L9 9.5 M9 6 L5.5 9.5" stroke="#5252f0" stroke-width="0.8"/></svg>
<div class="t" style="left:229.5px;top:312.0px;font-size:7.4px;color:#555">Open Read-only</div>
<svg class="a" style="left:218.5px;top:328.6px" width="11" height="11" viewBox="0 0 11 11"><path d="M5 0.5 V7 M2.2 4.2 L5 7 L7.8 4.2" fill="none" stroke="#5252f0" stroke-width="0.8"/><path d="M0.8 7.5 V9.2 H9.2 V7.5" fill="none" stroke="#5252f0" stroke-width="0.8"/></svg>
<div class="t" style="left:229.5px;top:329.8px;font-size:7.4px;color:#555">Download</div>
<svg class="a" style="left:218.5px;top:346.3px" width="11" height="11" viewBox="0 0 11 11"><path d="M3 2.5 H0.8 V9.2 H9.2 V2.5 H7 M0.8 5 H3 M7 5 H9.2" fill="none" stroke="#5252f0" stroke-width="0.8"/><path d="M5 0.5 V6.5 M3 4.5 L5 6.5 L7 4.5" fill="none" stroke="#5252f0" stroke-width="0.8"/></svg>
<div class="t" style="left:229.5px;top:347.5px;font-size:7.4px;color:#555">Take Offline</div>
<svg class="a" style="left:218.5px;top:364.5px" width="11" height="11" viewBox="0 0 11 11"><path d="M2.5 0.8 H8.5 V3.5 H2.5Z" fill="#5252f0"/><path d="M0.5 3.5 H10.5 V8.5 H8.5 V6.5 H2.5 V8.5 H0.5Z" fill="#3333e8"/><path d="M2.5 6.5 H8.5 V10 H2.5Z" fill="#8a8af5"/></svg>
<div class="t" style="left:229.5px;top:365.7px;font-size:7.4px;color:#555">Print</div>
<svg class="a" style="left:218.5px;top:382.9px" width="11" height="11" viewBox="0 0 11 11"><path d="M6.5 1.5 V0.8 H1.5 C1 0.8 0.8 1 0.8 1.5 V7.5 H2.5" fill="none" stroke="#5252f0" stroke-width="0.8"/><rect x="3" y="2.8" width="6" height="7.2" rx="0.8" fill="none" stroke="#5252f0" stroke-width="0.8"/></svg>
<div class="t" style="left:229.5px;top:384.1px;font-size:7.4px;color:#555">Copy...</div>
<svg class="a" style="left:301.5px;top:384.7px" width="5" height="7" viewBox="0 0 5 7"><path d="M0.5 0.5 L4.5 3.5 L0.5 6.5Z" fill="#111"/></svg>
<svg class="a" style="left:217.8px;top:402px" width="8.8" height="8" viewBox="0 0 11 10"><g fill="none" stroke="#6aa6f3"><path d="M4.4 0.3 V1.8 M6.8 0.9 L5.9 2 M1.2 3.5 H2.9 M2.25 5.6 L3.1 4.8 M2.7 1.3 L3.3 2.2" stroke-width="0.9"/><path d="M4.4 3.3 L9.8 5.8 L7.5 6.8 L6.6 8.8 Z" stroke-width="1.05"/><path d="M7.5 6.8 L9.6 8.9" stroke-width="1.05"/></g></svg>
<div class="t" style="left:229.5px;top:401.6px;font-size:7.4px;color:#5e5e5e">1-Click Compare</div>
<svg class="a" style="left:218.3px;top:418.3px" width="11" height="11" viewBox="0 0 11 11"><path d="M0.3 0.6 C2.5 0.2 4.5 1 5.3 2.5 L6.2 4.6" fill="none" stroke="#5e9ef2" stroke-width="1.1"/><path d="M7.5 1.4 V4" stroke="#6aa6f3" stroke-width="0.9"/><path d="M0.3 5.3 C2.5 5.3 4.5 5.8 6.2 6.5 L8.9 7.9 V8.7 H0.3 Z" fill="#78aef5"/><path d="M8.6 5.3 C8.1 6 7.3 6.5 6.5 6.6" fill="none" stroke="#78aef5" stroke-width="0.8"/></svg>
<div class="t" style="left:229.5px;top:419.5px;font-size:7.4px;color:#555">Compare</div>
<svg class="a" style="left:218.5px;top:436.3px" width="11" height="11" viewBox="0 0 11 11"><path d="M5 0.8 L6.2 3.6 L9.2 3.8 L6.9 5.7 L7.7 8.9 L5 7.2 L2.3 8.9 L3.1 5.7 L0.8 3.8 L3.8 3.6Z" fill="none" stroke="#5252f0" stroke-width="0.9"/></svg>
<div class="t" style="left:229.5px;top:437.5px;font-size:7.4px;color:#555">Add to My Favorites</div>
<svg class="a" style="left:218.5px;top:454.3px" width="11" height="11" viewBox="0 0 11 11"><path d="M6 0.8 C8.5 0.8 9 3 8.5 5 C8 6.5 7.5 7 7.5 7.5 C8.5 8 9.3 8.5 9.3 9.5" fill="none" stroke="#4b4bef" stroke-width="0.8"/><path d="M3.8 0.8 C6 0.8 6.5 2.5 6 4.5 C5.7 5.8 5.2 6.5 5.3 7.2 C6.5 7.8 7.3 8.3 7.3 9.5 H0.5 C0.5 8.3 1.5 7.8 2.5 7.2 C2.5 6.5 1.8 5.8 1.6 4.5 C1.2 2.5 1.8 0.8 3.8 0.8Z" fill="#2e2ee0"/></svg>
<div class="t" style="left:229.5px;top:455.5px;font-size:7.4px;color:#555">Share...</div>
<svg class="a" style="left:301.5px;top:456.1px" width="5" height="7" viewBox="0 0 5 7"><path d="M0.5 0.5 L4.5 3.5 L0.5 6.5Z" fill="#111"/></svg>
<svg class="a" style="left:218.5px;top:472.1px" width="11" height="11" viewBox="0 0 11 11"><path d="M0.5 5 H9 M5.5 1.5 L9 5 L5.5 8.5" fill="none" stroke="#5252f0" stroke-width="0.9"/></svg>
<div class="t" style="left:229.5px;top:473.3px;font-size:7.4px;color:#555">Move</div>
<svg class="a" style="left:218.5px;top:489.9px" width="11" height="11" viewBox="0 0 11 11"><path d="M5.5 9.2 H0.8 V1 H3.5 L4.5 2 H9.2 V5.5" fill="none" stroke="#5252f0" stroke-width="0.9"/><path d="M7.5 6 V9.5 M5.8 7.7 H9.2" stroke="#5252f0" stroke-width="0.9"/><path d="M2 4 L5 6.5" stroke="#5252f0" stroke-width="0.6"/></svg>
<div class="t" style="left:229.5px;top:491.1px;font-size:7.4px;color:#555">Add to Folder</div>
<svg class="a" style="left:218.5px;top:507.8px" width="11" height="11" viewBox="0 0 11 11"><path d="M0.5 1.5 H8.5 L7.8 3 V9.5 H1.2 V3Z" fill="none" stroke="#f03a3a" stroke-width="1.1"/><path d="M3.5 0.8 H5.5" stroke="#f03a3a" stroke-width="1.4"/><path d="M3.2 4 V8 M4.5 4 V8 M5.8 4 V8" stroke="#f37a7a" stroke-width="0.7"/></svg>
<div class="t" style="left:229.5px;top:509.0px;font-size:7.4px;color:#555">Move to Trash</div>
<svg class="a" style="left:218.5px;top:525.6px" width="11" height="11" viewBox="0 0 11 11"><circle cx="1.6" cy="1.6" r="1.1" fill="none" stroke="#5252f0" stroke-width="0.9"/><circle cx="1.6" cy="5" r="1.1" fill="none" stroke="#5252f0" stroke-width="0.9"/><circle cx="1.6" cy="8.4" r="1.1" fill="none" stroke="#5252f0" stroke-width="0.9"/><path d="M4 1.6 H9 M4 5 H9 M4 8.4 H9" stroke="#5252f0" stroke-width="1"/></svg>
<div class="t" style="left:229.5px;top:526.8px;font-size:7.4px;color:#555">More Actions</div>
<svg class="a" style="left:301.5px;top:527.4px" width="5" height="7" viewBox="0 0 5 7"><path d="M0.5 0.5 L4.5 3.5 L0.5 6.5Z" fill="#111"/></svg>
<div class="a" style="left:212.3px;top:395.1px;width:96.2px;height:19.6px;border:3.1px solid #17a83a"></div>

</body></html>
